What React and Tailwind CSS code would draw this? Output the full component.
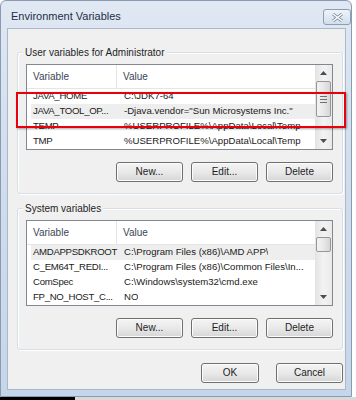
import React from 'react'

const USER_VARS = [
  { name: 'JAVA_HOME', value: 'C:\\JDK7-64' },
  { name: 'JAVA_TOOL_OP...', value: '-Djava.vendor="Sun Microsystems Inc."', selected: true },
  { name: 'TEMP', value: '%USERPROFILE%\\AppData\\Local\\Temp' },
  { name: 'TMP', value: '%USERPROFILE%\\AppData\\Local\\Temp' },
]

const SYSTEM_VARS = [
  { name: 'AMDAPPSDKROOT', value: 'C:\\Program Files (x86)\\AMD APP\\', selected: true },
  { name: 'C_EM64T_REDI...', value: 'C:\\Program Files (x86)\\Common Files\\In...' },
  { name: 'ComSpec', value: 'C:\\Windows\\system32\\cmd.exe' },
  { name: 'FP_NO_HOST_C...', value: 'NO' },
]

function Arrow({ down }) {
  return (
    <svg width="7" height="4" viewBox="0 0 7 4">
      {down ? <path d="M0 0h7L3.5 4z" fill="#4d4d4d" /> : <path d="M0 4h7L3.5 0z" fill="#4d4d4d" />}
    </svg>
  )
}

function ScrollBar({ thumbHeight, grip }) {
  return (
    <div className="w-[17px] h-full flex flex-col bg-gradient-to-r from-[#e3e3e3] via-[#f3f3f3] to-[#e9e9e9]">
      <div className="h-[16px] flex items-center justify-center shrink-0">
        <Arrow />
      </div>
      <div className="flex-1 flex flex-col px-[1px]">
        <div className={`${thumbHeight} shrink-0 rounded-[2px] border border-[#979797] bg-gradient-to-r from-[#f3f3f3] via-[#e8e8e8] to-[#d6d6d6] flex flex-col items-center justify-center gap-[2px]`}>
          {grip && (
            <>
              <div className="w-[7px] h-[1px] bg-[#6f6f6f]" />
              <div className="w-[7px] h-[1px] bg-[#6f6f6f]" />
              <div className="w-[7px] h-[1px] bg-[#6f6f6f]" />
            </>
          )}
        </div>
        <div className="flex-1" />
      </div>
      <div className="h-[16px] flex items-center justify-center shrink-0">
        <Arrow down />
      </div>
    </div>
  )
}

function VarList({ rows, thumbHeight, grip }) {
  return (
    <div className="h-[86px] border border-[#828790] bg-white flex">
      <div className="flex-1 flex flex-col min-w-0">
        <div className="h-[24px] flex items-center border-b border-[#e5e5e5] text-[#3b4658] shrink-0">
          <div className="w-[90px] h-full flex items-center pl-[6px] border-r border-[#e5e5e5]">Variable</div>
          <div className="pl-[6px]">Value</div>
        </div>
        {rows.map(r => (
          <div
            key={r.name}
            className={`h-[15px] ml-[4px] flex items-center text-[#1a1a1a] whitespace-nowrap text-[9.6px] ${r.selected ? 'bg-[#eeeeee]' : ''}`}
          >
            <div className="w-[86px] pl-[2px] shrink-0 tracking-[-0.3px]">{r.name}</div>
            <div className="pl-[7px] overflow-hidden">{r.value}</div>
          </div>
        ))}
      </div>
      <ScrollBar thumbHeight={thumbHeight} grip={grip} />
    </div>
  )
}

function Button({ children, className = 'w-[67px]' }) {
  return (
    <button className={`${className} h-[20px] rounded-[3px] border border-[#707070] bg-gradient-to-b from-[#f4f4f4] via-[#e9e9e9] to-[#d6d6d6] shadow-[inset_0_0_0_1px_#fcfcfc] text-[#1e1e1e] leading-none`}>
      {children}
    </button>
  )
}

function Group({ title, className, children }) {
  return (
    <div className={`relative border border-[#d5dfe5] rounded-[3px] shadow-[inset_1px_1px_0_#fff,1px_1px_0_#fff] pt-[11px] pl-[8px] pr-[9px] ${className}`}>
      <span className="absolute -top-[7px] left-[5px] px-[2px] bg-[#f0f0f0] text-[#1e1e1e] leading-[13px]">{title}</span>
      {children}
    </div>
  )
}

export default function App() {
  return (
    <div className="w-[356px] h-[400px] bg-white relative overflow-hidden font-['Liberation_Sans',Arial,sans-serif] text-[10px]">
      <div className="w-[352px] h-[397px] rounded-t-[6px] border border-[#8a9ab0] bg-gradient-to-b from-[#dfe8f3] via-[#cfdcec] to-[#c6d6ea] flex flex-col">
        {/* Title bar */}
        <div className="h-[27px] flex items-center justify-between pl-[10px] shrink-0">
          <span className="text-[11px] text-[#1e2f45] mt-[4px]">Environment Variables</span>
          <div className="w-[28px] h-[16px] mt-[5px] rounded-[3px] border border-[#8d9db3] bg-gradient-to-b from-[#eef3f9] to-[#d3deeb] flex items-center justify-center">
            <svg width="11" height="9" viewBox="0 0 11 9">
              <path d="M1 1L10 8M10 1L1 8" stroke="#7f8fa5" strokeWidth="3" />
              <path d="M1 1L10 8M10 1L1 8" stroke="#ffffff" strokeWidth="1.4" />
            </svg>
          </div>
        </div>
        {/* Client area */}
        <div className="ml-[6px] mr-[5px] h-[362px] bg-[#f0f0f0] border border-[#a9b8ca] flex flex-col pl-[9px] pr-[2px]">
          <Group title="User variables for Administrator" className="mt-[23px] h-[142px]">
            <VarList rows={USER_VARS} thumbHeight="h-[36px]" grip />
            <div className="flex justify-end gap-[8px] mt-[12px]">
              <Button>New...</Button>
              <Button>Edit...</Button>
              <Button>Delete</Button>
            </div>
          </Group>
          <Group title="System variables" className="mt-[14px] h-[142px]">
            <VarList rows={SYSTEM_VARS} thumbHeight="h-[15px]" />
            <div className="flex justify-end gap-[8px] mt-[12px]">
              <Button>New...</Button>
              <Button>Edit...</Button>
              <Button>Delete</Button>
            </div>
          </Group>
          <div className="flex justify-end gap-[17px] mt-[13px]">
            <Button className="w-[58px]">OK</Button>
            <Button>Cancel</Button>
          </div>
        </div>
      </div>
      <div className="h-[3px] flex">
        <div className="w-[75px] bg-black" />
        <div className="flex-1 bg-[#d9d9d9]" />
      </div>
      {/* Red highlight annotation */}
      <div className="absolute left-[16px] top-[92px] w-[330px] h-[36px] border-2 border-[#e8000b] shadow-[1px_1px_2px_rgba(0,0,0,0.35)] pointer-events-none" />
    </div>
  )
}
